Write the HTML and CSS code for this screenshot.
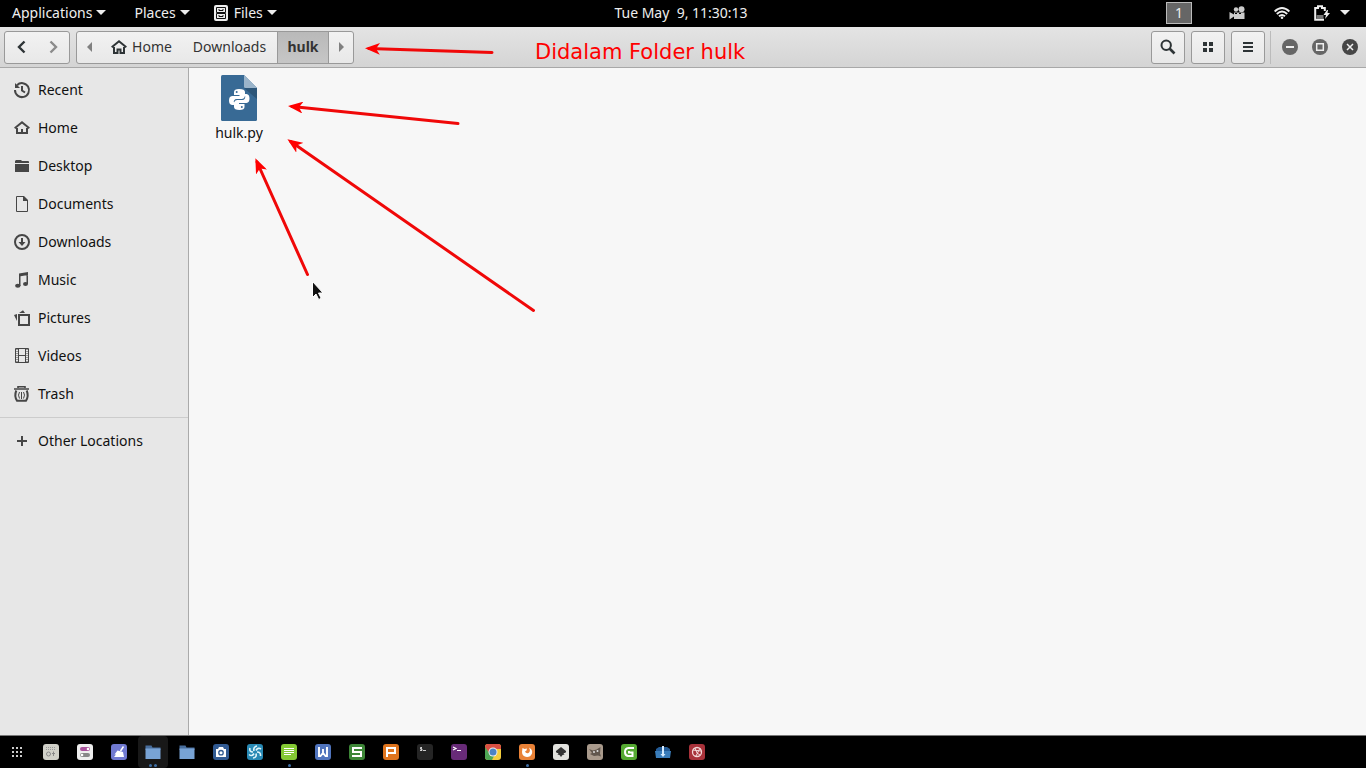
FILE: index.html
```html
<!DOCTYPE html>
<html lang="en">
<head>
	<meta charset="UTF-8">
	<title>hulk</title>
	<link rel="stylesheet" href="styles.css">
</head>
<body>
	<!-- top panel -->
	<div class="panel">
		<div class="menus">
			<button class="menu">Applications<i class="caret"></i></button>
			<button class="menu">Places<i class="caret"></i></button>
			<button class="menu files">
				<svg class="cabinet" viewBox="0 0 14 16"><rect width="14" height="16" rx="2" fill="#eee"/><path d="M2.5 2.5h9v5h-9zM2.5 8.5h9v5h-9z" fill="none" stroke="#111"/><path d="M5 4v1.500h4V4M5 10v1.500h4V10" fill="none" stroke="#111"/></svg>
				Files<i class="caret"></i>
			</button>
		</div>
		<button class="clock">Tue May&nbsp; 9, 11:30:13</button>
		<div class="status">
			<button class="workspace">1</button>
			<svg class="camera" viewBox="0 0 16 16" fill="#ccc"><circle cx="7" cy="4.500" r="2.200"/><circle cx="12.500" cy="4.300" r="3"/><path d="M5 7.500h10.500V14H5V11.500L.5 14.500V7L5 9.500z"/><path d="M6 8.500h2M10 8.500h2" stroke="#000"/></svg>
			<svg class="wifi" viewBox="0 0 16 16" fill="none" stroke="#eee" stroke-width="1.900"><path d="M.6 6.500Q8-.5 15.400 6.500M2.800 9Q8 4 13.200 9M5 11.300Q8 8.500 11 11.300"/><circle cx="8" cy="12.700" r="1.300" fill="#eee" stroke="none"/></svg>
			<button class="battery" aria-label="System">
				<svg viewBox="0 0 16 16"><path d="M10 14.800H1.200V3H4V1.200h4V3h2.800v3" fill="none" stroke="#eee" stroke-width="2"/><path d="M2.500 10h7v4h-7z" fill="#777"/><path d="M13 5l-3.500 5h2.500l-1 4 5-6h-2.500l.5-3z" fill="#eee"/></svg>
				<i class="caret"></i>
			</button>
		</div>
	</div>

	<!-- window header -->
	<div class="header">
		<div class="group nav">
			<button aria-label="Back"><svg viewBox="0 0 16 16"><path d="M10.500 2.500L5 8l5.500 5.500" fill="none" stroke="#2e3436" stroke-width="2.400"/></svg></button>
			<button aria-label="Forward"><svg viewBox="0 0 16 16"><path d="M5.500 2.500L11 8l-5.500 5.500" fill="none" stroke="#8b8b8b" stroke-width="2.400"/></svg></button>
		</div>
		<div class="group path">
			<button class="step" aria-label="Scroll left"><i class="tri left"></i></button>
			<button class="home"><svg viewBox="0 0 16 16"><path d="M.7 8.300L8 2.200l7.300 6.100" fill="none" stroke="#2e3436" stroke-width="2"/><path d="M3 8v6h3.500v-3.500h3V14H13V8" fill="none" stroke="#2e3436" stroke-width="2"/></svg>Home</button>
			<button class="downloads">Downloads</button>
			<button class="current">hulk</button>
			<button class="step" aria-label="Scroll right"><i class="tri"></i></button>
		</div>
		<div class="tools">
			<button class="tool" aria-label="Search"><svg viewBox="0 0 16 16" fill="none" stroke="#2e3436"><circle cx="6.200" cy="6.200" r="4.700" stroke-width="2"/><path d="M9.500 9.500l5 5" stroke-width="2.600"/></svg></button>
			<button class="tool" aria-label="Grid view"><svg viewBox="0 0 16 16" fill="#2e3436"><path d="M3 3h4v4H3zM9 3h4v4H9zM3 9h4v4H3zM9 9h4v4H9z"/></svg></button>
			<button class="tool" aria-label="Menu"><svg viewBox="0 0 16 16" fill="#2e3436"><path d="M3 3h10v2H3zM3 7h10v2H3zM3 11h10v2H3z"/></svg></button>
		</div>
		<div class="controls">
			<button aria-label="Minimize"><svg viewBox="0 0 16 16"><circle cx="8" cy="8" r="8" fill="#666"/><path d="M4 8h8" stroke="#eee" stroke-width="2"/></svg></button>
			<button aria-label="Maximize"><svg viewBox="0 0 16 16"><circle cx="8" cy="8" r="8" fill="#666"/><path d="M4.700 4.700h6.600v6.600H4.700z" fill="none" stroke="#eee" stroke-width="1.500"/></svg></button>
			<button aria-label="Close"><svg viewBox="0 0 16 16"><circle cx="8" cy="8" r="8" fill="#464646"/><path d="M5 5l6 6M11 5l-6 6" stroke="#eee" stroke-width="1.500"/></svg></button>
		</div>
	</div>

	<div class="main">
		<div class="sidebar">
			<ul>
				<li><a href="#"><svg viewBox="0 0 16 16" fill="none" stroke="#464646"><path d="M3 3.200A7 7 0 1 1 1 8" stroke-width="2"/><path d="M8 4v4.500l3 2" stroke-width="2"/><path d="M1 1v5h5z" fill="#464646" stroke="none"/></svg>Recent</a></li>
				<li><a href="#"><svg viewBox="0 0 16 16" fill="none" stroke="#464646" stroke-width="2"><path d="M.7 8.300L8 2.200l7.300 6.100"/><path d="M3 8v5h10V8"/><path d="M8 9V14"/></svg>Home</a></li>
				<li><a href="#"><svg viewBox="0 0 16 16" fill="#464646"><path d="M1 5V3l1-1h5l1 1h6.500l.5 1v1zM1 6h14v8H1z"/></svg>Desktop</a></li>
				<li><a href="#"><svg viewBox="0 0 16 16"><path d="M2.500.5h7l4 4v11h-11z" fill="none" stroke="#464646"/><path d="M9 0v5h5V4l-4-4z" fill="#464646"/></svg>Documents</a></li>
				<li><a href="#"><svg viewBox="0 0 16 16" fill="none" stroke="#464646"><circle cx="8" cy="8" r="7" stroke-width="2"/><path d="M8 4v5" stroke-width="2"/><path d="M4.500 8h7L8 12z" fill="#464646" stroke="none"/></svg>Downloads</a></li>
				<li><a href="#"><svg viewBox="0 0 16 16" fill="#464646"><path d="M5 1.500L14 0v3L6.500 4.300V14H5zM12.500 2H14v10h-1.500z"/><ellipse cx="3.800" cy="13.700" rx="2.700" ry="2"/><ellipse cx="11.500" cy="11.900" rx="2.500" ry="2"/></svg>Music</a></li>
				<li><a href="#"><svg viewBox="0 0 16 16"><path d="M5 5h10v10H5z" fill="none" stroke="#464646" stroke-width="2"/><path d="M5 3L9 .3 11 3zM3 4v7L0 5z" fill="#464646"/></svg>Pictures</a></li>
				<li><a href="#"><svg viewBox="0 0 16 16" fill="none" stroke="#464646"><path d="M1.500.5h13v14h-13zM4.500 1v14M11.500 1v14M4 7.500h8"/><path d="M3 1v13M13 1v13" stroke-dasharray="1 1"/></svg>Videos</a></li>
				<li><a href="#"><svg viewBox="0 0 16 16" fill="none" stroke="#464646"><path d="M4 2V.8h7V2M0 3h15" stroke-width="1.600"/><path d="M2.300 4.500Q0 10 3 14.800h9q3-4.800.700-10.300" stroke-width="2"/><path d="M5.500 6q-2 3 0 6.500M7.500 6v7M9.500 6q2 3 0 6.500"/></svg>Trash</a></li>
			</ul>
			<a class="other" href="#"><svg viewBox="0 0 16 16"><path d="M3 8h10M8 3v10" stroke="#464646" stroke-width="2"/></svg>Other Locations</a>
		</div>
		<div class="view">
			<a class="file" href="#">
				<svg viewBox="0 0 36 46"><path d="M1.500 0H23l13 13v31.500q0 1.500-1.500 1.500h-33Q0 46 0 44.500v-43Q0 0 1.500 0z" fill="#386a95"/><path d="M23 13h13v11z" fill="#2c5679"/><path d="M23 0l13 13H24.500Q23 13 23 11.500z" fill="#9ab4ca"/>
					<path d="M18 14q-5 0-5 3v3h5.500v1H11q-3 .3-3 4.500t3 4.500h2v-3q0-3 3-3h5q3 0 3-3v-4q0-3-6-3z" fill="#fff"/><path d="M18.500 35q5 0 5-3v-3H18v-1h7.500q3-.3 3-4.500T25.500 19H24v3q0 3-3 3h-5q-3 0-3 3v4q0 3 5.500 3z" fill="#fff"/><path d="M13 27q0-2.500 3-2.500h5q3 0 3-3" fill="none" stroke="#386a95" stroke-width=".7"/><circle cx="15.700" cy="17" r="1" fill="#386a95"/><circle cx="20.800" cy="32" r="1" fill="#386a95"/></svg>
				hulk.py
			</a>
		</div>
	</div>

	<!-- dock -->
	<div class="dock">
		<button aria-label="Show applications"><svg viewBox="0 0 16 16" fill="#ccc"><path d="M3 3h2v2H3zM7 3h2v2H7zM11 3h2v2h-2zM3 7h2v2H3zM7 7h2v2H7zM11 7h2v2h-2zM3 11h2v2H3zM7 11h2v2H7zM11 11h2v2h-2z"/></svg></button>
		<button aria-label="Settings"><svg viewBox="0 0 16 16"><rect width="16" height="16" rx="3" fill="#d0d0c8"/><path d="M3 3.500h10M3 5.500h10" stroke="#999" stroke-dasharray="1 1"/><circle cx="5.500" cy="10" r="2" fill="none" stroke="#888"/><path d="M10.500 7.500V12M9 9.500h3" stroke="#888"/></svg></button>
		<button aria-label="Tweaks"><svg viewBox="0 0 16 16"><rect width="16" height="16" rx="3" fill="#eee"/><rect x="3" y="3" width="10" height="4" rx="2" fill="#a9529c"/><circle cx="11" cy="5" r="1.300" fill="#fff"/><rect x="3" y="9" width="10" height="4" rx="2" fill="#888"/><circle cx="5" cy="11" r="1.300" fill="#fff"/></svg></button>
		<button aria-label="Cleaner"><svg viewBox="0 0 16 16"><rect width="16" height="16" rx="3" fill="#7079d0"/><path d="M12.500 2.500L9.500 7" stroke="#fff" stroke-width="1.500"/><path d="M6.500 6.500l5.500 1.500 1 5H3l2-2.500H3.500z" fill="#fff"/></svg></button>
		<button class="active" aria-label="Files"><svg viewBox="0 0 16 16"><path d="M.5 1.500h6l1 2h8V6H.5z" fill="#486e9d"/><path d="M.5 4.500h15V15H.5z" fill="#78a3d4"/></svg><i class="dots two"></i></button>
		<button aria-label="Folder"><svg viewBox="0 0 16 16"><path d="M.5 1.500h6l1 2h8V6H.5z" fill="#486e9d"/><path d="M.5 4.500h15V15H.5z" fill="#78a3d4"/></svg></button>
		<button aria-label="Screenshot"><svg viewBox="0 0 16 16"><rect width="16" height="16" rx="3" fill="#315a92"/><path d="M3 5h2l1-2h4l1 2h2v8H3z" fill="#fff"/><circle cx="8" cy="8.700" r="2.200" fill="#fff" stroke="#315a92" stroke-width="1.300"/></svg></button>
		<button aria-label="Shutter"><svg viewBox="0 0 16 16"><rect width="16" height="16" rx="3" fill="#2889b4"/><path d="M7 7Q6 3 10 2M9 6.500q2-3.500 5-1.500M10 8q4 0 3.500 4M9 9.500q1 4-3 4.500M7 9.500q-2 3.500-5 1M6 8Q2 8 3 4" fill="none" stroke="#dff4fa" stroke-width="1.600"/></svg></button>
		<button aria-label="Notes"><svg viewBox="0 0 16 16"><rect width="16" height="16" rx="3" fill="#84c934"/><path d="M3 4.500h10M3 6.500h10M3 8.500h10M3 10.500h7" stroke="#fff"/></svg><i class="dots"></i></button>
		<button aria-label="Writer"><svg viewBox="0 0 16 16"><rect width="16" height="16" rx="3" fill="#5074bd"/><path d="M4 3v9h1.500L8 9l2.500 3H12V3M8 5v4" fill="none" stroke="#fff" stroke-width="1.900"/></svg></button>
		<button aria-label="Spreadsheets"><svg viewBox="0 0 16 16"><rect width="16" height="16" rx="3" fill="#3d8637"/><path d="M13 4H4v4h8v4H3" fill="none" stroke="#fff" stroke-width="2"/></svg></button>
		<button aria-label="Presentation"><svg viewBox="0 0 16 16"><rect width="16" height="16" rx="3" fill="#df741d"/><path d="M3 4h9v5H4M4 4v9" fill="none" stroke="#fff" stroke-width="2"/></svg></button>
		<button aria-label="Terminal"><svg viewBox="0 0 16 16"><rect width="16" height="16" rx="3" fill="#252525"/><path d="M5 3.500H3.500V5H5v1.500H3M4.300 3v4M6 6.500h3" fill="none" stroke="#ddd" stroke-width=".9"/></svg></button>
		<button aria-label="Terminator"><svg viewBox="0 0 16 16"><rect width="16" height="16" rx="3" fill="#682b78"/><path d="M2 3l3 1.500L2 6M6 6.500h4" fill="none" stroke="#fff" stroke-width="1.200"/></svg></button>
		<button aria-label="Chrome"><svg viewBox="0 0 16 16"><rect width="16" height="16" rx="3" fill="#f3cd3c"/><path d="M0 4V3q0-3 3-3h10q3 0 3 3v2H8L4.500 9z" fill="#d94f43"/><path d="M0 3l5 7 4 2-2 4H3q-3 0-3-3z" fill="#4da554"/><circle cx="8" cy="8" r="4.500" fill="#eee"/><circle cx="8" cy="8" r="3.500" fill="#4a83c4"/></svg></button>
		<button aria-label="Firefox"><svg viewBox="0 0 16 16"><rect width="16" height="16" rx="3" fill="#e98237"/><path d="M3.500 4l2 1L8 4.500 7.500 6.500 6 7.500q1 2.500 3.500 1.500Q12 7 10 3.500q4 2 3 6Q11.500 13 8 13 3 12.500 3 8z" fill="#fff"/></svg><i class="dots"></i></button>
		<button aria-label="Inkscape"><svg viewBox="0 0 16 16"><rect width="16" height="16" rx="3" fill="#e2e2de"/><path d="M8 3l5 4q.5 2-2.500 2l1 1.500-2 .5L8 13l-1.500-2-2-.5 1-1.500Q2.500 9 3 7z" fill="#333"/></svg></button>
		<button aria-label="GIMP"><svg viewBox="0 0 16 16"><rect width="16" height="16" rx="3" fill="#a99a8c"/><path d="M2 5l4 1.500 3.500-1L13.500 3 13 9.500l1 3-3-1-4 .5-4-2 2-1z" fill="#61564d"/><circle cx="7" cy="8" r="1" fill="#ddd"/><circle cx="10.500" cy="7" r="1" fill="#ddd"/></svg></button>
		<button aria-label="Geany"><svg viewBox="0 0 16 16"><rect width="16" height="16" rx="3" fill="#55a932"/><path d="M13 4H7.500Q4 4.500 4 8t3 4h4.500V8.500H8V7" fill="none" stroke="#fff" stroke-width="2"/></svg></button>
		<button aria-label="Download manager"><svg viewBox="0 0 16 16"><path d="M1 8V5l3-2h3l1-1 1 1h3l3 2v3z" fill="#235b96"/><path d="M0 7h16l-1 7H1z" fill="#3a7dbb"/><path d="M8 2v9" stroke="#d7ecff" stroke-width="2"/><path d="M5.500 10h5L8 13z" fill="#d7ecff"/></svg></button>
		<button aria-label="Fern"><svg viewBox="0 0 16 16"><rect width="16" height="16" rx="3" fill="#a8323a"/><circle cx="8" cy="8" r="4.500" fill="none" stroke="#f4dada" stroke-width="1.300"/><path d="M4 6l8 1M6 4l2 5M11 4L7 12M8 9l3 2" stroke="#f4dada"/></svg></button>
	</div>

	<!-- notes drawn over the window -->
	<div class="note">Didalam Folder hulk</div>
	<svg class="arrows" width="560" height="330" viewBox="0 0 560 330">
		<defs>
			<marker id="head" markerUnits="userSpaceOnUse" markerWidth="15" markerHeight="12" refX="11" refY="6" orient="auto"><path d="M15 6L0 0l4 6-4 6z" fill="#f00"/></marker>
		</defs>
		<g stroke="#f00808" stroke-width="3" stroke-linecap="round">
			<path d="M492 52.400L369 48.500" marker-end="url(#head)"/>
			<path d="M458 123.500L292 106.500" marker-end="url(#head)"/>
			<path d="M533.500 310.500L290.700 141.500" marker-end="url(#head)"/>
			<path d="M307.500 274.500L257 162" marker-end="url(#head)"/>
		</g>
		<path d="M312.500 281.500v16l3.500-3.500 2.700 5.500 2.500-1.200-2.700-5.300h4.500z" fill="#111" stroke="#fff"/>
	</svg>
</body>
</html>
```

FILE: styles.css
```css
*{padding:0;margin:0;box-sizing:border-box;}
ul,li{list-style:none;}
a{color:inherit;text-decoration:none;}
button{border:0;background:none;font:inherit;color:inherit;}
svg{display:block;width:16px;height:16px;flex:none;}
body{display:flex;flex-direction:column;height:100vh;overflow:hidden;position:relative;font:14px/20px "Noto Sans","Open Sans",sans-serif;color:#111;background:#000;}

/* top panel */
.panel{display:grid;grid-template-columns:1fr auto 1fr;align-items:center;height:27px;padding:0 16px 2px 12px;background:#000;color:#eee;}
.menus,.status,.menu,.battery{display:flex;align-items:center;}
.menus{gap:28px;}
.menu{gap:4px;}
.files{gap:6px;margin-left:-4px;}
.files .caret{margin-left:-2px;}
.cabinet{width:14px;}
.caret{border:5px solid transparent;border-top-color:#eee;border-bottom:0;}
.status{justify-content:flex-end;}
.workspace{width:26px;height:22px;margin-right:37px;border:1px solid #bbb;background:#666;line-height:20px;}
.camera{margin-right:29px;}
.wifi{margin-right:24px;}
.battery{gap:10px;}

/* window header */
.header{display:flex;align-items:center;height:41px;padding:0 8px 0 4px;border-bottom:1px solid #a8a8a8;background:linear-gradient(#e4e4e4,#d4d4d4);color:#333;}
.group,.tool{border:1px solid #999;border-radius:3px;background:linear-gradient(#f2f2f2,#e8e8e8);}
.group{display:flex;height:33px;}
.group button{display:flex;align-items:center;justify-content:center;}
.nav{margin-right:6px;padding:0 1px;}
.nav button{width:31px;}
.path .step{width:24px;}
.path .home{width:81px;gap:5px;}
.path .downloads{width:95px;}
.path .current{width:52px;border:1px solid #999;border-width:0 1px;background:linear-gradient(#b9b9b9,#c6c6c6);font-weight:bold;}
.tri{border:5px solid transparent;border-left-color:#808080;border-right:0;}
.tri.left{border-left:0;border-right:5px solid #808080;}
.tools{display:flex;gap:6px;margin-left:auto;padding-right:5px;border-right:1px solid #bbb;}
.tool{display:flex;align-items:center;justify-content:center;width:34px;height:33px;}
.controls{display:flex;gap:14px;margin-left:11px;}

/* places and files */
.main{display:flex;flex:1;min-height:0;border-bottom:1px solid #777;background:#f7f7f7;}
.sidebar{width:189px;padding-top:3px;border-right:1px solid #aaa;background:#e7e7e7;}
.sidebar a{display:flex;align-items:center;gap:8px;height:38px;padding-left:14px;}
.sidebar svg{overflow:visible;}
.sidebar ul{padding-bottom:4px;border-bottom:1px solid #ccc;}
.sidebar .other{margin-top:4px;}
.view{flex:1;padding:7px 24px;}
.file{display:flex;flex-direction:column;align-items:center;gap:2px;width:52px;}
.file svg{width:36px;height:46px;}

/* dock */
.dock{display:flex;height:32px;padding:0 2px;background:#000;}
.dock button{position:relative;display:flex;align-items:center;justify-content:center;width:30px;height:32px;margin-right:4px;}
.dock .active{background:#181818;border-radius:4px;}
.dots{position:absolute;left:14px;bottom:1px;width:3px;height:3px;border-radius:2px;background:#3f6fa5;}
.dots.two{left:11px;box-shadow:5px 0 #3f6fa5;}

/* notes */
.note{position:absolute;left:535px;top:39px;font:21px/26px "DejaVu Sans",sans-serif;color:#f00;}
.arrows{position:absolute;left:0;top:0;width:560px;height:330px;pointer-events:none;}
```
